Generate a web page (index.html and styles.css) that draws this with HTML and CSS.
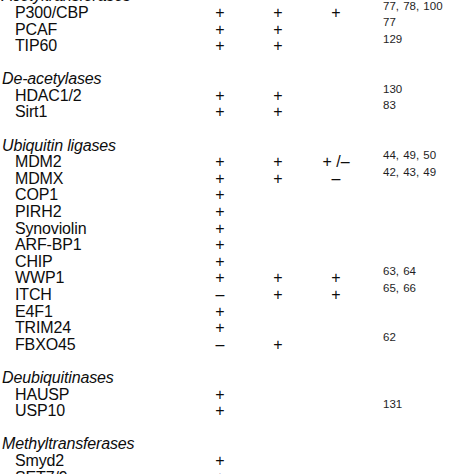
FILE: index.html
```html
<!DOCTYPE html>
<html>
<head>
<meta charset="utf-8">
<link rel="stylesheet" href="styles.css">
</head>
<body>
<div class="table">
  <section class="group">
    <div class="head">Acetyltransferases</div>
    <div class="row"><span class="name">P300/CBP</span><span class="c">+</span><span class="c">+</span><span class="c">+</span><span class="ref">77, 78, 100</span></div>
    <div class="row"><span class="name">PCAF</span><span class="c">+</span><span class="c">+</span><span class="c"></span><span class="ref">77</span></div>
    <div class="row"><span class="name">TIP60</span><span class="c">+</span><span class="c">+</span><span class="c"></span><span class="ref">129</span></div>
  </section>
  <section class="group">
    <div class="head">De-acetylases</div>
    <div class="row"><span class="name">HDAC1/2</span><span class="c">+</span><span class="c">+</span><span class="c"></span><span class="ref">130</span></div>
    <div class="row"><span class="name">Sirt1</span><span class="c">+</span><span class="c">+</span><span class="c"></span><span class="ref">83</span></div>
  </section>
  <section class="group">
    <div class="head">Ubiquitin ligases</div>
    <div class="row"><span class="name">MDM2</span><span class="c">+</span><span class="c">+</span><span class="c">+ /–</span><span class="ref">44, 49, 50</span></div>
    <div class="row"><span class="name">MDMX</span><span class="c">+</span><span class="c">+</span><span class="c">–</span><span class="ref">42, 43, 49</span></div>
    <div class="row"><span class="name">COP1</span><span class="c">+</span><span class="c"></span><span class="c"></span><span class="ref"></span></div>
    <div class="row"><span class="name">PIRH2</span><span class="c">+</span><span class="c"></span><span class="c"></span><span class="ref"></span></div>
    <div class="row"><span class="name">Synoviolin</span><span class="c">+</span><span class="c"></span><span class="c"></span><span class="ref"></span></div>
    <div class="row"><span class="name">ARF-BP1</span><span class="c">+</span><span class="c"></span><span class="c"></span><span class="ref"></span></div>
    <div class="row"><span class="name">CHIP</span><span class="c">+</span><span class="c"></span><span class="c"></span><span class="ref"></span></div>
    <div class="row"><span class="name">WWP1</span><span class="c">+</span><span class="c">+</span><span class="c">+</span><span class="ref">63, 64</span></div>
    <div class="row"><span class="name">ITCH</span><span class="c">–</span><span class="c">+</span><span class="c">+</span><span class="ref">65, 66</span></div>
    <div class="row"><span class="name">E4F1</span><span class="c">+</span><span class="c"></span><span class="c"></span><span class="ref"></span></div>
    <div class="row"><span class="name">TRIM24</span><span class="c">+</span><span class="c"></span><span class="c"></span><span class="ref"></span></div>
    <div class="row"><span class="name">FBXO45</span><span class="c">–</span><span class="c">+</span><span class="c"></span><span class="ref">62</span></div>
  </section>
  <section class="group">
    <div class="head">Deubiquitinases</div>
    <div class="row"><span class="name">HAUSP</span><span class="c">+</span><span class="c"></span><span class="c"></span><span class="ref"></span></div>
    <div class="row"><span class="name">USP10</span><span class="c">+</span><span class="c"></span><span class="c"></span><span class="ref">131</span></div>
  </section>
  <section class="group">
    <div class="head">Methyltransferases</div>
    <div class="row"><span class="name">Smyd2</span><span class="c">+</span><span class="c"></span><span class="c"></span><span class="ref"></span></div>
    <div class="row"><span class="name">SET7/9</span><span class="c">+</span><span class="c"></span><span class="c"></span><span class="ref"></span></div>
  </section>
</div>
</body>
</html>
```

FILE: styles.css
```css
html, body {
  margin: 0;
  padding: 0;
  background: #ffffff;
  overflow: hidden;
}

body {
  width: 474px;
  height: 474px;
  font-family: "Liberation Sans", Arial, Helvetica, sans-serif;
  color: #0d0d0d;
}

.table {
  margin-top: -11.7px;
  display: flex;
  flex-direction: column;
  gap: 16.6px;
}

.group {
  display: flex;
  flex-direction: column;
}

.head {
  font-style: italic;
  font-size: 16px;
  letter-spacing: -0.15px;
  line-height: 16.6px;
  height: 16.6px;
  padding-left: 2px;
  white-space: nowrap;
}

.row {
  display: grid;
  grid-template-columns: 191px 58px 58px 58px 1fr;
  height: 16.6px;
  font-size: 16px;
  line-height: 16.6px;
}

.name {
  padding-left: 15px;
  letter-spacing: -0.15px;
  white-space: nowrap;
}

.c {
  text-align: center;
  white-space: nowrap;
}

.ref {
  align-self: start;
  font-size: 11.5px;
  line-height: 11.5px;
  margin-top: -4.3px;
  padding-left: 18px;
  word-spacing: 1px;
  white-space: nowrap;
  color: #1e1e1e;
}
```
